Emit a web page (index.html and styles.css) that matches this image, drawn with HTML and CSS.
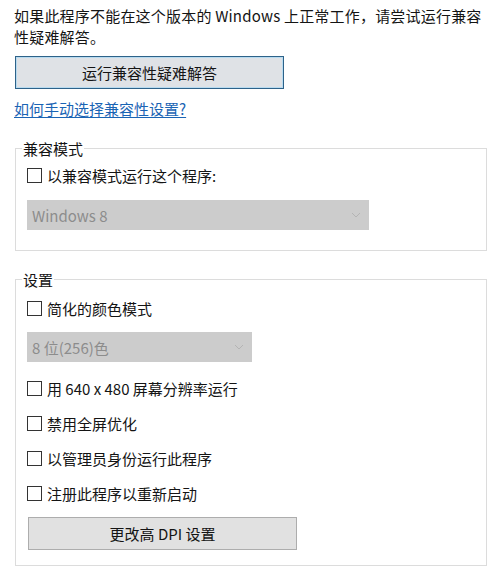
FILE: index.html
```html
<!DOCTYPE html>
<html lang="zh-CN">
<head>
<meta charset="utf-8">
<link rel="stylesheet" href="styles.css">
</head>
<body>
<p class="intro">如果此程序不能在这个版本的 Windows 上正常工作，请尝试运行兼容性疑难解答。</p>
<button class="btn btn-focus" type="button">运行兼容性疑难解答</button>
<a class="link" href="#">如何手动选择兼容性设置?</a>

<fieldset class="group group-compat">
  <legend>兼容模式</legend>
  <label class="check"><span class="box"></span>以兼容模式运行这个程序:</label>
  <div class="select select-wide"><span>Windows 8</span><svg class="chev" width="10" height="6" viewBox="0 0 10 6"><path d="M1 1l4 4 4-4" fill="none" stroke="#b4b4b4" stroke-width="1"/></svg></div>
</fieldset>

<fieldset class="group group-settings">
  <legend>设置</legend>
  <label class="check"><span class="box"></span>简化的颜色模式</label>
  <div class="select select-narrow"><span>8 位(256)色</span><svg class="chev" width="10" height="6" viewBox="0 0 10 6"><path d="M1 1l4 4 4-4" fill="none" stroke="#b4b4b4" stroke-width="1"/></svg></div>
  <label class="check check-first"><span class="box"></span>用 640 x 480 屏幕分辨率运行</label>
  <label class="check check-next"><span class="box"></span>禁用全屏优化</label>
  <label class="check check-next"><span class="box"></span>以管理员身份运行此程序</label>
  <label class="check check-next"><span class="box"></span>注册此程序以重新启动</label>
  <button class="btn btn-dpi" type="button">更改高 DPI 设置</button>
</fieldset>
</body>
</html>
```
FILE: styles.css
```css
* { box-sizing: border-box; }
html, body { background: #fff; }
body {
  margin: 0;
  padding: 5px 3px 0 15px;
  font-family: "Noto Sans CJK SC", "Noto Sans", sans-serif;
  font-size: 15px;
  line-height: 21px;
  color: #141414;
  width: 489px;
  height: 569px;
  overflow: hidden;
}
.intro {
  margin: 0 0 0 -1px;
  width: 474px;
  letter-spacing: 0.2px;
}
.btn {
  display: flex;
  align-items: center;
  justify-content: center;
  font: inherit;
  color: #141414;
  background: #e1e1e1;
  border: 1px solid #adadad;
  width: 269px;
  height: 33px;
  padding: 0;
}
.btn-focus {
  margin-top: 9px;
  border-color: #2e6289;
  box-shadow: inset 0 0 0 1px #b8dbf0;
  background: #dfe2e6;
}
.link {
  display: block;
  width: max-content;
  margin: 9px 0 0 -1px;
  color: #1a64b4;
  text-decoration: underline;
  text-underline-offset: 2px;
}
.group {
  margin: 19px 0 0 0;
  width: 472px;
  border: 1px solid #dcdcdc;
  padding: 0 11px 0 11px;
  display: flex;
  flex-direction: column;
  align-items: flex-start;
}
.group legend {
  padding: 0 1px;
  margin-left: -5px;
  line-height: 21px;
}
.group-compat {
  padding-top: 6px;
  padding-bottom: 20px;
}
.group-compat .select { margin-top: 14px; }
.group-settings {
  margin-top: 18px;
  padding-top: 8px;
  padding-bottom: 15px;
}
.check {
  display: flex;
  align-items: center;
  height: 21px;
  white-space: nowrap;
}
.box {
  width: 15px;
  height: 15px;
  border: 1px solid #333;
  background: #fff;
  margin-right: 5px;
  flex: none;
}
.select {
  margin-top: 13px;
  height: 30px;
  background: #cccccc;
  color: #8c8c8c;
  display: flex;
  align-items: center;
  justify-content: space-between;
  padding: 0 8px 0 5px;
}
.select-wide { width: 342px; }
.select-narrow { width: 225px; }
.chev { flex: none; }
.check-first { margin-top: 16px; }
.check-next { margin-top: 14px; }
.btn-dpi {
  margin-top: 13px;
  margin-left: 1px;
}
```
